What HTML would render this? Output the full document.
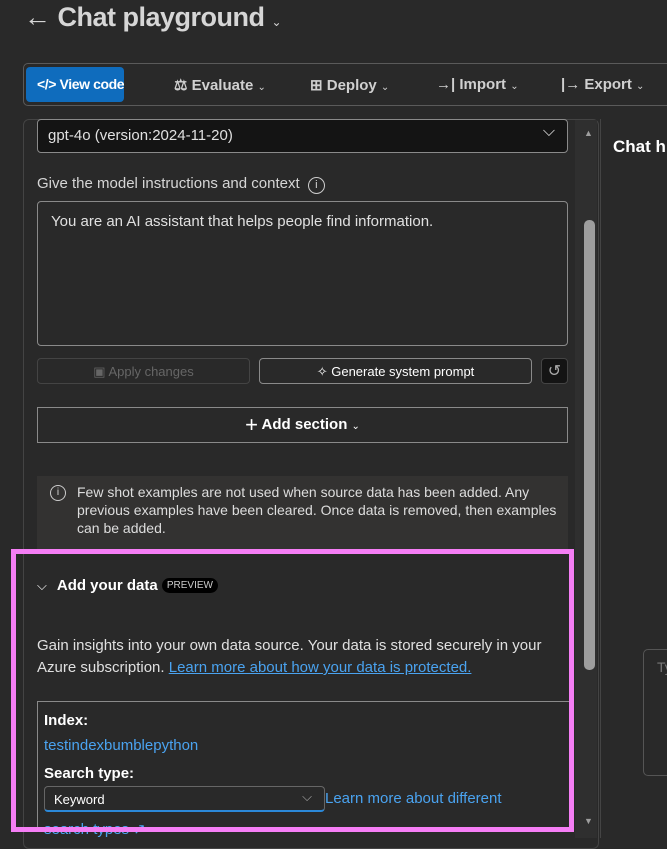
<!DOCTYPE html>
<html><head><style>
*{box-sizing:border-box;margin:0;padding:0}
body{width:667px;height:838px;background:#292929;font-family:"Liberation Sans",sans-serif;color:#d6d6d6;position:relative;overflow:hidden;font-size:14px}
.a{position:absolute;white-space:nowrap}
.bx{position:absolute;border:1px solid #8a8a8a;border-radius:4px}
</style></head><body>
<div class="a" style="left:24px;top:2px;font-size:27px;font-weight:bold;color:#d6d6d6;letter-spacing:-0.5px">← Chat playground <span style="font-size:12px;font-weight:normal">⌄</span></div>

<div class="a" style="left:23px;top:63px;width:660px;height:43px;border:1px solid #5a5a5a;border-radius:5px"></div>
<div class="a" style="left:26px;top:67px;width:98px;height:35px;background:#0f6cbd;border-radius:4px;color:#fff;font-weight:bold;font-size:14px;line-height:35px;padding-left:11px;letter-spacing:-0.4px">&lt;/&gt; View code</div>
<div class="a" style="left:174px;top:76px;font-size:15px;font-weight:bold;color:#d0d0d0">⚖ Evaluate <span style="font-size:10px;font-weight:normal">⌄</span></div>
<div class="a" style="left:310px;top:76px;font-size:15px;font-weight:bold;color:#d0d0d0">⊞ Deploy <span style="font-size:10px;font-weight:normal">⌄</span></div>
<div class="a" style="left:436px;top:76px;font-size:15px;font-weight:bold;color:#d0d0d0">→| Import <span style="font-size:10px;font-weight:normal">⌄</span></div>
<div class="a" style="left:561px;top:76px;font-size:15px;font-weight:bold;color:#d0d0d0">|→ Export <span style="font-size:10px;font-weight:normal">⌄</span></div>

<div class="a" style="left:23px;top:119px;width:576px;height:730px;border:1px solid #444;border-radius:6px"></div>
<div class="a" style="left:575px;top:120px;width:22px;height:718px;background:#2f2f2f"></div>
<div class="a" style="left:584px;top:220px;width:11px;height:450px;background:#9e9e9e;border-radius:5px"></div>
<div class="a" style="left:584px;top:128px;font-size:9px;color:#9e9e9e">▲</div>
<div class="a" style="left:584px;top:816px;font-size:9px;color:#9e9e9e">▼</div>
<div class="a" style="left:600px;top:119px;width:1px;height:719px;background:#444"></div>
<div class="a" style="left:613px;top:137px;font-size:17px;font-weight:bold;color:#fff">Chat hi</div>
<div class="a" style="left:643px;top:649px;width:40px;height:127px;border:1px solid #555;border-radius:5px;padding:9px 13px;color:#777">Ty</div>

<div class="bx" style="left:37px;top:119px;width:531px;height:34px;background:#141414;padding:7px 10px;font-size:15px;color:#e0e0e0">gpt-4o (version:2024-11-20)<span style="position:absolute;right:12px;top:3px;font-size:16px">⌵</span></div>
<div class="a" style="left:37px;top:175px;font-size:15px">Give the model instructions and context <span style="display:inline-block;width:17px;height:17px;border:1px solid #ccc;border-radius:50%;font-size:11px;text-align:center;line-height:15px;margin-left:4px">i</span></div>
<div class="bx" style="left:37px;top:201px;width:531px;height:145px;padding:11px 13px;font-size:15px;color:#e0e0e0">You are an AI assistant that helps people find information.</div>

<div class="a" style="left:37px;top:358px;width:213px;height:26px;border:1px solid #444;border-radius:4px;color:#666;font-size:13px;text-align:center;line-height:26px">▣ Apply changes</div>
<div class="a" style="left:259px;top:358px;width:273px;height:26px;border:1px solid #8a8a8a;border-radius:4px;color:#fff;font-size:13px;text-align:center;line-height:26px">✧ Generate system prompt</div>
<div class="a" style="left:541px;top:358px;width:27px;height:26px;background:#141414;border:1px solid #444;border-radius:4px;color:#aaa;text-align:center;line-height:25px;font-size:16px">↺</div>

<div class="a" style="left:37px;top:407px;width:531px;height:36px;border:1px solid #8a8a8a;color:#fff;text-align:center;line-height:34px;font-size:15px;font-weight:bold"><span style="font-size:22px;font-weight:normal;vertical-align:-3px">+</span> Add section <span style="font-size:10px;font-weight:normal">⌄</span></div>

<div class="a" style="left:37px;top:476px;width:531px;height:73px;background:#333231;padding:7px 8px 0 40px;font-size:14px;line-height:18px;color:#ddd;white-space:normal">
<span style="position:absolute;left:13px;top:9px;width:16px;height:16px;border:1px solid #ccc;border-radius:50%;font-size:10px;text-align:center;line-height:14px">i</span>
Few shot examples are not used when source data has been added. Any previous examples have been cleared. Once data is removed, then examples can be added.</div>

<div class="a" style="left:11px;top:549px;width:563px;height:283px;border:5px solid #f57ef5"></div>
<div class="a" style="left:37px;top:577px;font-size:15px;font-weight:bold;color:#fff"><span style="font-weight:normal;font-size:13px;margin-right:10px">⌵</span>Add your data <span style="background:#000;border-radius:9px;font-size:10px;font-weight:normal;padding:2px 5px;color:#ccc;vertical-align:2px">PREVIEW</span></div>
<div class="a" style="left:37px;top:635px;width:540px;font-size:15px;line-height:22px;color:#e0e0e0;white-space:normal">Gain insights into your own data source. Your data is stored securely in your Azure subscription. <span style="color:#4aa3f0;text-decoration:underline">Learn more about how your data is protected.</span></div>
<div class="a" style="left:37px;top:701px;width:532px;height:130px;border:1px solid #8a8a8a;border-right:none"></div>
<div class="a" style="left:44px;top:712px;font-size:15px;font-weight:bold;color:#fff">Index:</div>
<div class="a" style="left:44px;top:737px;font-size:15px;color:#4aa3f0">testindexbumblepython</div>
<div class="a" style="left:44px;top:765px;font-size:15px;font-weight:bold;color:#fff">Search type:</div>
<div class="a" style="left:44px;top:786px;width:281px;height:26px;border:1px solid #666;border-bottom:2px solid #2b88d8;border-radius:4px;padding:5px 9px;font-size:13px;color:#fff">Keyword<span style="position:absolute;right:12px;top:2px;color:#aaa">⌵</span></div>
<div class="a" style="left:325px;top:790px;font-size:15px;color:#4aa3f0">Learn more about different</div>
<div class="a" style="left:44px;top:820px;font-size:15px;color:#4aa3f0">search types ↗</div>
<div class="a" style="left:11px;top:827px;width:563px;height:5px;background:#f57ef5"></div>
</body></html>
